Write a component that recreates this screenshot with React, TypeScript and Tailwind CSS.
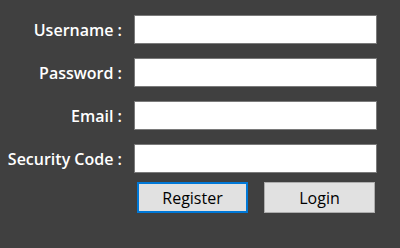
export default function App() {
  const fields = ["Username :", "Password :", "Email :", "Security Code :"];

  return (
    <div className="w-[400px] h-[248px] bg-[#404040] pt-[15px] font-['Open_Sans',sans-serif]">
      <div className="grid grid-cols-[122px_243px] gap-x-[12px] gap-y-[14px] items-center">
        {fields.map((f) => (
          <div key={f} className="contents">
            <div className="text-right text-white font-semibold text-[16px] leading-none">{f}</div>
            <input type="text" className="h-[29px] bg-white border border-[#7a7a7a] outline-none px-1" />
          </div>
        ))}
      </div>
      <div className="flex gap-[16px] pl-[137px] mt-[9px]">
        <button className="w-[111px] h-[31px] bg-[#e1e1e1] border-2 border-[#0078d7] text-black text-[16px]">Register</button>
        <button className="w-[111px] h-[31px] bg-[#e1e1e1] border border-[#adadad] text-black text-[16px]">Login</button>
      </div>
    </div>
  );
}
